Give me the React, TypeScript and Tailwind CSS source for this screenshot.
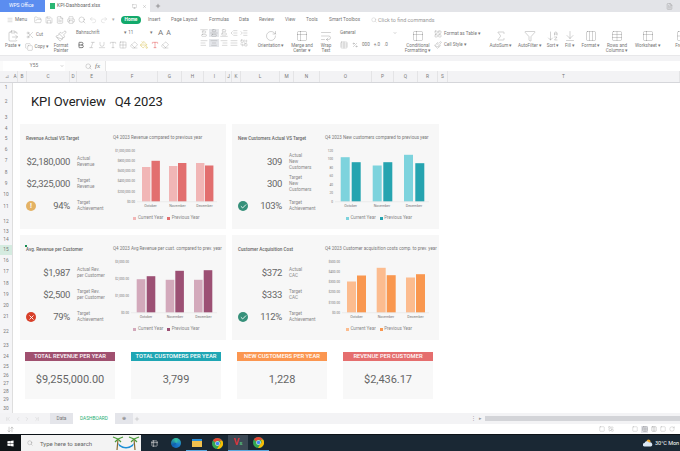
import {
  ArrowDownAZ, ArrowDownUp, Bold, ChevronDown, ChevronFirst, ChevronLast, ChevronLeft, ChevronRight, ClipboardPaste,
  Columns3, Copy, Filter, Grid2x2, Italic, LayoutGrid, Menu, Monitor, PaintBucket, Paintbrush, Percent, Plus, Printer,
  Redo2, RotateCw, Save, Scissors, Search, Sigma, Square, Table, Table2, Underline, Undo2, WrapText, AlignCenter,
  AlignLeft, AlignRight, AlignJustify, AlignVerticalJustifyCenter, AlignVerticalJustifyEnd, AlignVerticalJustifyStart,
  IndentDecrease, IndentIncrease, FolderOpen, FileText, Combine, Eraser, Type, ArrowDownToLine, Check, X,
} from 'lucide-react'
import { FaWindows } from 'react-icons/fa'

// Hoja de cálculo: columnas y filas
const columnas: Array<[string, number]> = [
  ['A', 5], ['B', 9], ['C', 43], ['D', 7], ['E', 30], ['F', 51], ['G', 24], ['H', 22], ['I', 22], ['J', 6], ['K', 9],
  ['L', 39], ['M', 14], ['N', 26], ['O', 52], ['P', 22], ['Q', 24], ['R', 20], ['S', 10], ['T', 232],
]
const filas = [9, 20, 12, 10, 10, 11, 12, 11, 11, 11, 14, 15, 6, 10, 10, 11, 12, 11, 11, 11, 12, 17, 12, 10, 10, 8, 8, 8, 8, 9]

interface ChartData {
  ejes: string[]
  anchorEje: number
  xs: number[]
  ancho: number
  alturas: number[]
  centros: number[]
  claro: string
  oscuro: string
}

interface KpiData {
  titulo: string
  filas: Array<{ valor: string; label: string[] }>
  estado: 'warn' | 'ok' | 'bad'
  tituloChart: string
  chart: ChartData
}

const kpis: KpiData[] = [
  {
    titulo: 'Revenue Actual VS Target',
    estado: 'warn',
    filas: [
      { valor: '$2,180,000', label: ['Actual', 'Revenue'] },
      { valor: '$2,325,000', label: ['Target', 'Revenue'] },
      { valor: '94%', label: ['Target', 'Achievement'] },
    ],
    tituloChart: 'Q4 2023 Revenue compared to previous year',
    chart: {
      ejes: ['$1,000,000.00', '$800,000.00', '$600,000.00', '$400,000.00', '$200,000.00', '$0.00'],
      anchorEje: 22, xs: [29, 38.5, 56, 65, 83, 92], ancho: 8.4,
      alturas: [34.5, 40.7, 35.5, 38.5, 38.5, 36], centros: [37.5, 64.5, 91.5],
      claro: '#f1b6b6', oscuro: '#e26f6f',
    },
  },
  {
    titulo: 'New Customers Actual VS Target',
    estado: 'ok',
    filas: [
      { valor: '309', label: ['Actual', 'New', 'Customers'] },
      { valor: '300', label: ['Target', 'New', 'Customers'] },
      { valor: '103%', label: ['Target', 'Achievement'] },
    ],
    tituloChart: 'Q4 2023 New customers compared to previous year',
    chart: {
      ejes: ['120', '100', '80', '60', '40', '20', '0'],
      anchorEje: 8, xs: [15.7, 26.7, 47.7, 58.3, 79, 90.3], ancho: 9,
      alturas: [44.3, 39.3, 36, 39.3, 46.7, 38.3], centros: [25.7, 57, 89],
      claro: '#7dd3dd', oscuro: '#26a4b0',
    },
  },
  {
    titulo: 'Avg. Revenue per Customer',
    estado: 'bad',
    filas: [
      { valor: '$1,987', label: ['Actual Rev.', 'per Customer'] },
      { valor: '$2,500', label: ['Target Rev.', 'per Customer'] },
      { valor: '79%', label: ['Target', 'Achievement'] },
    ],
    tituloChart: 'Q4 2023 Avg Revenue per cust. compared to prev. year',
    chart: {
      ejes: ['$3,000.00', '$2,000.00', '$1,000.00', '$0.00'],
      anchorEje: 16, xs: [23.7, 33.7, 52.7, 62.3, 81, 90.7], ancho: 8.6,
      alturas: [33.3, 36.3, 32.7, 41.7, 32.7, 42.3], centros: [33, 62, 90.5],
      claro: '#d3a9bb', oscuro: '#9c5074',
    },
  },
  {
    titulo: 'Customer Acquisition Cost',
    estado: 'ok',
    filas: [
      { valor: '$372', label: ['Actual', 'CAC'] },
      { valor: '$333', label: ['Target', 'CAC'] },
      { valor: '112%', label: ['Target', 'Achievement'] },
    ],
    tituloChart: 'Q4 2023 Customer acquisition costs comp. to prev. year',
    chart: {
      ejes: ['$500.00', '$400.00', '$300.00', '$200.00', '$100.00', '$0.00'],
      anchorEje: 15, xs: [22, 32, 51.7, 61.7, 81, 91], ancho: 9,
      alturas: [31, 37, 44.7, 37.3, 35, 38.3], centros: [31.5, 61, 90.5],
      claro: '#fcbc8f', oscuro: '#f9974f',
    },
  },
]

const totales = [
  { titulo: 'TOTAL REVENUE PER YEAR', valor: '$9,255,000.00', color: 'bg-[#a0506f]' },
  { titulo: 'TOTAL CUSTOMERS PER YEAR', valor: '3,799', color: 'bg-[#1fa6b4]' },
  { titulo: 'NEW CUSTOMERS PER YEAR', valor: '1,228', color: 'bg-[#fb9650]' },
  { titulo: 'REVENUE PER CUSTOMER', valor: '$2,436.17', color: 'bg-[#e56e6e]' },
]

const menu = ['Insert', 'Page Layout', 'Formulas', 'Data', 'Review', 'View', 'Tools', 'Smart Toolbox']

const Estado = ({ estado }: { estado: KpiData['estado'] }) => {
  if (estado === 'warn') {
    return <div className="w-[10px] h-[10px] rounded-full bg-[#e4b264] flex items-center justify-center text-white text-[7px] font-bold leading-none">!</div>
  }
  if (estado === 'ok') {
    return (
      <div className="w-[10px] h-[10px] rounded-full bg-[#36907a] flex items-center justify-center">
        <Check size={7} strokeWidth={3} color="#fff" />
      </div>
    )
  }
  return (
    <div className="w-[10px] h-[10px] rounded-full bg-[#d8402a] flex items-center justify-center">
      <X size={7} strokeWidth={3} color="#fff" />
    </div>
  )
}

const Chart = ({ chart }: { chart: ChartData }) => {
  const base = 56.5
  const paso = 51 / (chart.ejes.length - 1)
  return (
    <svg width="113" height="65" viewBox="0 0 113 65" className="block">
      {chart.ejes.map((eje, i) => (
        <text key={eje} x={chart.anchorEje} y={base - 51 + i * paso + 1.2} fontSize="3.2" fill="#777" textAnchor="end">{eje}</text>
      ))}
      {chart.xs.map((x, i) => (
        <rect key={i} x={x} y={base - chart.alturas[i]} width={chart.ancho} height={chart.alturas[i]} fill={i % 2 === 0 ? chart.claro : chart.oscuro} />
      ))}
      <line x1={chart.anchorEje + 2} x2="104" y1={base + 0.2} y2={base + 0.2} stroke="#e2e2e2" strokeWidth="0.5" />
      {['October', 'November', 'December'].map((mes, i) => (
        <text key={mes} x={chart.centros[i]} y={base + 5.6} fontSize="3.6" fill="#777" textAnchor="middle">{mes}</text>
      ))}
    </svg>
  )
}

const KpiCard = ({ kpi }: { kpi: KpiData }) => (
  <div className="relative h-[105px] bg-[#f7f7f7] flex">
    <div className="w-[93px] shrink-0 pl-[6px]">
      <p className="pt-[12px] h-[27px] text-[4.6px] font-medium text-[#666] leading-[6px] whitespace-nowrap">{kpi.titulo}</p>
      <div className="flex flex-col">
        {kpi.filas.map((fila, i) => (
          <div key={fila.valor} className="h-[22px] flex items-center">
            <div className="w-[10px] shrink-0">{i === 2 && <Estado estado={kpi.estado} />}</div>
            <div className="w-[44px] -ml-[10px] shrink-0 text-right text-[9.5px] tracking-[-0.3px] text-[#666] whitespace-nowrap">{fila.valor}</div>
            <div className="ml-[7px] text-[4.6px] leading-[5.8px] text-[#888] whitespace-nowrap">
              {fila.label.map((l) => <div key={l}>{l}</div>)}
            </div>
          </div>
        ))}
      </div>
    </div>
    <div className="flex-1 min-w-0">
      <p className="pt-[11px] h-[21px] text-[4.5px] leading-[6px] text-[#777] whitespace-nowrap">{kpi.tituloChart}</p>
      <Chart chart={kpi.chart} />
      <div className="flex justify-center gap-[4px] text-[4.6px] leading-[6px] text-[#888] mt-[5px] pr-[6px]">
        <span className="flex items-center gap-[1.5px]">
          <i className="w-[3px] h-[3px] block" style={{ background: kpi.chart.claro }} />Current Year
        </span>
        <span className="flex items-center gap-[1.5px]">
          <i className="w-[3px] h-[3px] block" style={{ background: kpi.chart.oscuro }} />Previous Year
        </span>
      </div>
    </div>
  </div>
)

const RibbonBtn = ({ w, lines, icon }: { w: string; lines: string[]; icon: React.ReactNode }) => (
  <div className={`${w} shrink-0 flex flex-col items-center`}>
    <div className="h-[14px] flex items-center justify-center mt-[1px]">{icon}</div>
    <div className="text-[4.6px] leading-[5.4px] text-center text-[#777] whitespace-nowrap">
      {lines.map((l) => <div key={l}>{l}</div>)}
    </div>
  </div>
)

const Chrome = () => (
  <svg width="11" height="11" viewBox="0 0 24 24">
    <circle cx="12" cy="12" r="12" fill="#34a853" />
    <path d="M12 0a12 12 0 0 1 10.4 6H12a6 6 0 0 0-5.6 3.6L2.2 5A12 12 0 0 1 12 0z" fill="#ea4335" />
    <path d="M22.4 6A12 12 0 0 1 11 24l5.2-8.5A6 6 0 0 0 16.6 6z" fill="#fbbc04" />
    <circle cx="12" cy="12" r="5" fill="#fff" />
    <circle cx="12" cy="12" r="4" fill="#4285f4" />
  </svg>
)

const PIcon = { size: 8, strokeWidth: 0.9, color: '#808080' }
const GIcon = { size: 12, strokeWidth: 0.7, color: '#808080' }

const Ribbon = () => (
  <div className="h-[28px] bg-white flex items-start pl-[3px] shrink-0 border-b border-[#e8e8ea]">
    <RibbonBtn w="w-[20px]" lines={['Paste ▾']} icon={<ClipboardPaste {...GIcon} />} />
    <div className="w-[30px] shrink-0 pl-[2px] text-[4.6px] text-[#777] flex flex-col gap-[4px] pt-[3px]">
      <span className="flex items-center gap-[2px] h-[8px] pl-[1px]"><Scissors {...PIcon} />Cut</span>
      <span className="flex items-center gap-[1.5px] h-[8px]"><Copy {...PIcon} />Copy ▾</span>
    </div>
    <RibbonBtn w="w-[16px]" lines={['Format', 'Painter']} icon={<Paintbrush {...GIcon} />} />
    <div className="w-[120px] ml-[7px] shrink-0 pt-[1px]">
      <div className="flex items-center h-[8px] text-[4.6px] text-[#777]">
        <span className="w-[48px]">Bahnschrift</span>
        <span className="w-[31px] flex justify-between pr-[2px]"><span>▾ 11</span><span>▾</span></span>
        <span className="text-[8px] ml-[3px]">A</span><span className="text-[7px] ml-[3px]">A</span>
      </div>
      <div className="flex items-center gap-[2.5px] mt-[4px] pl-[1px]">
        <Bold size={8} strokeWidth={2} color="#444" /><Italic {...PIcon} /><Underline {...PIcon} /><Type {...PIcon} />
        <Grid2x2 {...PIcon} /><Eraser {...PIcon} /><PaintBucket size={8} strokeWidth={1} color="#c9a800" />
        <Type size={8} strokeWidth={1.2} color="#d33" /><Eraser {...PIcon} />
      </div>
    </div>
    <div className="w-[50px] ml-[3px] shrink-0 pt-[1px] grid grid-cols-5 gap-y-[2px] justify-items-center">
      <AlignVerticalJustifyStart {...PIcon} />
      <span className="bg-[#e4e6ea] px-[1px]"><AlignVerticalJustifyCenter {...PIcon} /></span>
      <AlignVerticalJustifyEnd {...PIcon} /><IndentDecrease {...PIcon} /><IndentIncrease {...PIcon} />
      <AlignLeft {...PIcon} />
      <span className="bg-[#e4e6ea] px-[1px]"><AlignCenter {...PIcon} /></span>
      <AlignRight {...PIcon} /><AlignJustify {...PIcon} /><Combine {...PIcon} />
    </div>
    <div className="w-[5px] shrink-0" />
    <RibbonBtn w="w-[34px]" lines={['Orientation ▾']} icon={<RotateCw {...GIcon} />} />
    <RibbonBtn w="w-[28px]" lines={['Merge and', 'Center ▾']} icon={<Table2 {...GIcon} />} />
    <RibbonBtn w="w-[20px]" lines={['Wrap', 'Text']} icon={<WrapText {...GIcon} />} />
    <div className="w-[62px] ml-[4px] shrink-0 pt-[1px] pr-[5px] text-[4.6px] text-[#777]">
      <div className="h-[8px] flex justify-between items-center"><span>General</span><ChevronDown size={4} /></div>
      <div className="flex items-center gap-[4px] mt-[4px]">
        <Table {...PIcon} /><Percent size={6} strokeWidth={1} color="#666" /><span>000</span><span>+.0</span><span>.0</span>
      </div>
    </div>
    <RibbonBtn w="w-[32px]" lines={['Conditional', 'Formatting ▾']} icon={<Table2 {...GIcon} />} />
    <div className="w-[52px] shrink-0 pt-[2px] text-[4.6px] text-[#777] flex flex-col gap-[3px]">
      <span className="flex items-center gap-[2px] h-[8px]"><LayoutGrid {...PIcon} />Format as Table ▾</span>
      <span className="flex items-center gap-[2px] h-[8px]"><Paintbrush {...PIcon} />Cell Style ▾</span>
    </div>
    <RibbonBtn w="w-[30px]" lines={['AutoSum ▾']} icon={<Sigma {...GIcon} />} />
    <RibbonBtn w="w-[28px]" lines={['AutoFilter ▾']} icon={<Filter {...GIcon} />} />
    <RibbonBtn w="w-[18px]" lines={['Sort ▾']} icon={<ArrowDownAZ {...GIcon} />} />
    <RibbonBtn w="w-[16px]" lines={['Fill ▾']} icon={<ArrowDownToLine {...GIcon} />} />
    <RibbonBtn w="w-[26px]" lines={['Format ▾']} icon={<Columns3 {...GIcon} />} />
    <RibbonBtn w="w-[26px]" lines={['Rows and', 'Columns ▾']} icon={<Table {...GIcon} />} />
    <RibbonBtn w="w-[36px]" lines={['Worksheet ▾']} icon={<Table2 {...GIcon} />} />
    <RibbonBtn w="w-[32px]" lines={['Freeze']} icon={<Grid2x2 {...GIcon} />} />
  </div>
)

const App = () => {
  return (
    <div className="w-[680px] h-[451px] overflow-hidden flex flex-col bg-white font-['Roboto',sans-serif]">
      {/* Pestañas de la ventana */}
      <div className="h-[12px] bg-[#e3e4e8] flex items-stretch shrink-0 text-[5px]">
        <div className="w-[45px] bg-[#5b8df0] text-white flex items-center pl-[9px]">WPS Office</div>
        <div className="w-[105px] bg-white flex items-center pl-[5px] gap-[2px] text-[#666]">
          <span className="w-[5px] h-[6px] bg-[#2bb673] block" />
          <span className="flex-1">KPI-Dashboard.xlsx</span>
          <Monitor size={5} strokeWidth={1} />
          <X size={5} strokeWidth={1} className="mx-[3px]" />
        </div>
        <div className="flex items-center ml-[5px]"><Plus size={6} strokeWidth={2} color="#555" /></div>
        <div className="ml-auto mr-[7px] flex items-center"><FileText size={7} strokeWidth={1} color="#777" /></div>
      </div>
      {/* Menú */}
      <div className="h-[16px] bg-white flex items-center shrink-0 text-[4.8px] text-[#777] pl-[7px]">
        <Menu size={6} strokeWidth={1} />
        <span className="ml-[2px]">Menu</span>
        <div className="flex items-center gap-[3px] ml-[7px]">
          <FolderOpen {...PIcon} /><Save {...PIcon} /><FileText {...PIcon} /><Printer {...PIcon} /><Search {...PIcon} />
          <Undo2 size={8} strokeWidth={1} color="#bbb" /><Redo2 size={8} strokeWidth={1} color="#bbb" /><span className="text-[#aaa] ml-[1px]">▾</span>
        </div>
        <span className="ml-[6px] w-[20px] h-[8px] rounded-full bg-[#12a96b] text-white font-bold flex items-center justify-center">Home</span>
        <div className="flex ml-[7px]">
          {menu.map((m, i) => (
            <span key={m} className={`${['w-[23px]', 'w-[38px]', 'w-[30px]', 'w-[20px]', 'w-[26px]', 'w-[21px]', 'w-[23px]', 'w-[37px]'][i]} whitespace-nowrap`}>{m}</span>
          ))}
        </div>
        <span className="flex items-center gap-[1px] ml-[5px] text-[#999] text-[5.4px]"><Search size={6} strokeWidth={1} />Click to find commands</span>
      </div>
      <Ribbon />
      <div className="h-[5px] bg-[#f3f3f5] shrink-0" />
      {/* Barra de fórmulas */}
      <div className="h-[10px] bg-[#fbfbfb] flex items-center shrink-0 text-[4.8px] text-[#777]">
        <div className="w-[62px] h-full ml-[3px] bg-white flex items-center justify-center relative">
          Y55
          <ChevronDown size={4} className="absolute right-[1px]" />
        </div>
        <Search size={7} strokeWidth={1} className="ml-[20px]" />
        <span className="ml-[3px] italic font-['Liberation_Serif',serif] text-[7px] w-[10px]">fx</span>
        <div className="flex-1 h-full bg-white border-l border-[#e6e6e6]" />
      </div>
      {/* Cabecera de columnas */}
      <div className="h-[12px] bg-[#f3f3f5] border-b border-[#d5d6da] flex shrink-0 text-[4.8px] text-[#777]">
        <div className="w-[13px] flex items-center justify-center text-[#999]">⊿</div>
        {columnas.map(([nombre, ancho]) => (
          <div key={nombre} style={{ width: ancho }} className="flex items-center justify-center border-r border-[#e4e4e6] shrink-0">{nombre}</div>
        ))}
      </div>
      {/* Hoja */}
      <div className="h-[330px] flex shrink-0">
        <div className="w-[13px] bg-[#f5f5f7] shrink-0 text-[4.8px] text-[#777] border-r border-[#dedede]">
          {filas.map((h, i) => (
            <div key={i} style={{ height: h }} className={`flex items-center justify-center ${i === 14 ? 'bg-[#d5ebe0]' : ''}`}>{i + 1}</div>
          ))}
        </div>
        <div className="flex-1 pl-[7px] min-w-0">
          <h1 className="h-[41px] pt-[10px] pl-[11px] text-[13px] leading-[18px] text-[#222] font-normal flex gap-[9px] tracking-[-0.1px]">
            <span>KPI Overview</span><span>Q4 2023</span>
          </h1>
          <div className="relative w-[419px] grid grid-cols-[206px_207px] gap-[6px]">
            {kpis.map((k) => <KpiCard key={k.titulo} kpi={k} />)}
            <i className="absolute left-[5px] top-[121px] w-[1.5px] h-[1.5px] bg-[#128a50] block" />
          </div>
          <div className="flex gap-[16px] mt-[12px] pl-[5px]">
            {totales.map((t) => (
              <div key={t.titulo} className="w-[90px]">
                <div className={`${t.color} h-[9px] text-white text-[5.8px] font-medium flex items-center justify-center whitespace-nowrap`}>{t.titulo}</div>
                <div className="h-[38px] bg-[#f8f8f8] flex items-center justify-center text-[11px] text-[#666] tracking-[-0.05px]">{t.valor}</div>
              </div>
            ))}
          </div>
        </div>
      </div>
      {/* Pestañas de hojas */}
      <div className="h-[11px] bg-[#f3f3f5] flex items-center shrink-0 text-[4.8px] text-[#777]">
        <div className="flex items-center w-[50px] pl-[5px] gap-[3.5px] text-[#aaa]">
          <ChevronFirst size={6} strokeWidth={1} /><ChevronLeft size={6} strokeWidth={1} /><ChevronRight size={6} strokeWidth={1} /><ChevronLast size={6} strokeWidth={1} />
        </div>
        <div className="w-[23px] h-full bg-[#e4e5ea] flex items-center justify-center">Data</div>
        <div className="w-[42px] h-full bg-white text-[#27ae73] flex items-center justify-center">DASHBOARD</div>
        <div className="w-[18px] h-full bg-[#e4e5ea] flex items-center justify-center">⊕</div>
        <Plus size={6} strokeWidth={1} className="ml-[1px]" />
        <div className="flex-1" />
        <span className="text-[#999] mr-[3px]">⋮</span>
        <span className="text-[#999] mr-[3px]">▸</span>
        <div className="w-[195px] h-[5px] bg-[#d3d4d8]" />
      </div>
      {/* Barra de estado */}
      <div className="h-[10px] bg-white flex items-center shrink-0 pl-[7px] pr-[5px]">
        <ArrowDownUp size={7} strokeWidth={1} color="#666" />
        <div className="ml-auto flex items-center gap-[3px]">
          <Square size={6} strokeWidth={1} color="#888" /><Combine size={6} strokeWidth={1} color="#888" />
          <span className="w-[12px]" />
          <Square size={6} strokeWidth={1} color="#888" />
          <span className="bg-[#e4e5ea] p-[0.5px]"><Grid2x2 size={6} strokeWidth={1} color="#555" /></span>
          <Columns3 size={6} strokeWidth={1} color="#666" /><Square size={6} strokeWidth={1} color="#888" /><RotateCw size={6} strokeWidth={1} color="#888" />
        </div>
      </div>
      {/* Barra de tareas */}
      <div className="h-[17px] bg-[#1a2834] flex items-stretch shrink-0 border-t border-[#0d1318]">
        <div className="w-[21px] bg-[#101417] flex items-center justify-center"><FaWindows size={7} color="#fff" /></div>
        <div className="w-[120px] bg-[#f3f3f3] flex items-center pl-[6px] text-[6px] text-[#666] relative">
          <Search size={6} strokeWidth={1} className="mr-[7px]" />Type here to search
          <svg width="30" height="16" viewBox="0 0 30 16" className="absolute right-0 top-0">
            <path d="M6 15 L7 4 M24 15 L23 4" stroke="#8a6a30" strokeWidth="1.2" />
            <path d="M7 4 L2 2 M7 4 L12 2 M7 4 L4 7 M7 4 L10 7 M23 4 L18 2 M23 4 L28 2 M23 4 L20 7 M23 4 L26 7" stroke="#4b9b3a" strokeWidth="1.2" />
            <path d="M7 8 Q15 16 23 8 L22 11 Q15 16 8 11 Z" fill="#1d8fd6" />
          </svg>
        </div>
        <div className="flex items-stretch pl-[3px]">
          <div className="w-[21px] flex items-center justify-center"><Table2 size={7} color="#ddd" /></div>
          <div className="w-[21px] flex items-center justify-center">
            <span className="w-[10px] h-[10px] rounded-full block bg-[conic-gradient(#37c5a0,#1c7fd0,#0f5fb0,#37c5a0)]" />
          </div>
          <div className="w-[21px] flex items-center justify-center border-b border-[#5aa9e0]">
            <span className="w-[10px] h-[8px] block bg-[#f2c14e] border-t-2 border-[#2a8fd8]" />
          </div>
          <div className="w-[21px] flex items-center justify-center"><Chrome /></div>
          <div className="w-[20px] bg-[#3c4955] flex items-center justify-center border-b border-[#5aa9e0]">
            <span className="text-[9px] leading-none font-bold text-[#d9363e]">V<span className="text-[#58c27d] text-[6px]">s</span></span>
          </div>
          <div className="w-[21px] flex items-center justify-center border-b border-[#5aa9e0]"><Chrome /></div>
        </div>
        <div className="ml-auto flex items-center gap-[2px] text-[5.5px] text-white w-[37px] shrink-0">
          <svg width="10" height="8" viewBox="0 0 20 16">
            <circle cx="11" cy="5" r="4" fill="#f0a92e" />
            <path d="M3 15a3.5 3.5 0 0 1 0-7 5 5 0 0 1 9-1 4 4 0 0 1 4 8z" fill="#dbe8f5" />
          </svg>
          <span className="whitespace-nowrap">30°C Mon</span>
        </div>
      </div>
    </div>
  )
}

export default App
